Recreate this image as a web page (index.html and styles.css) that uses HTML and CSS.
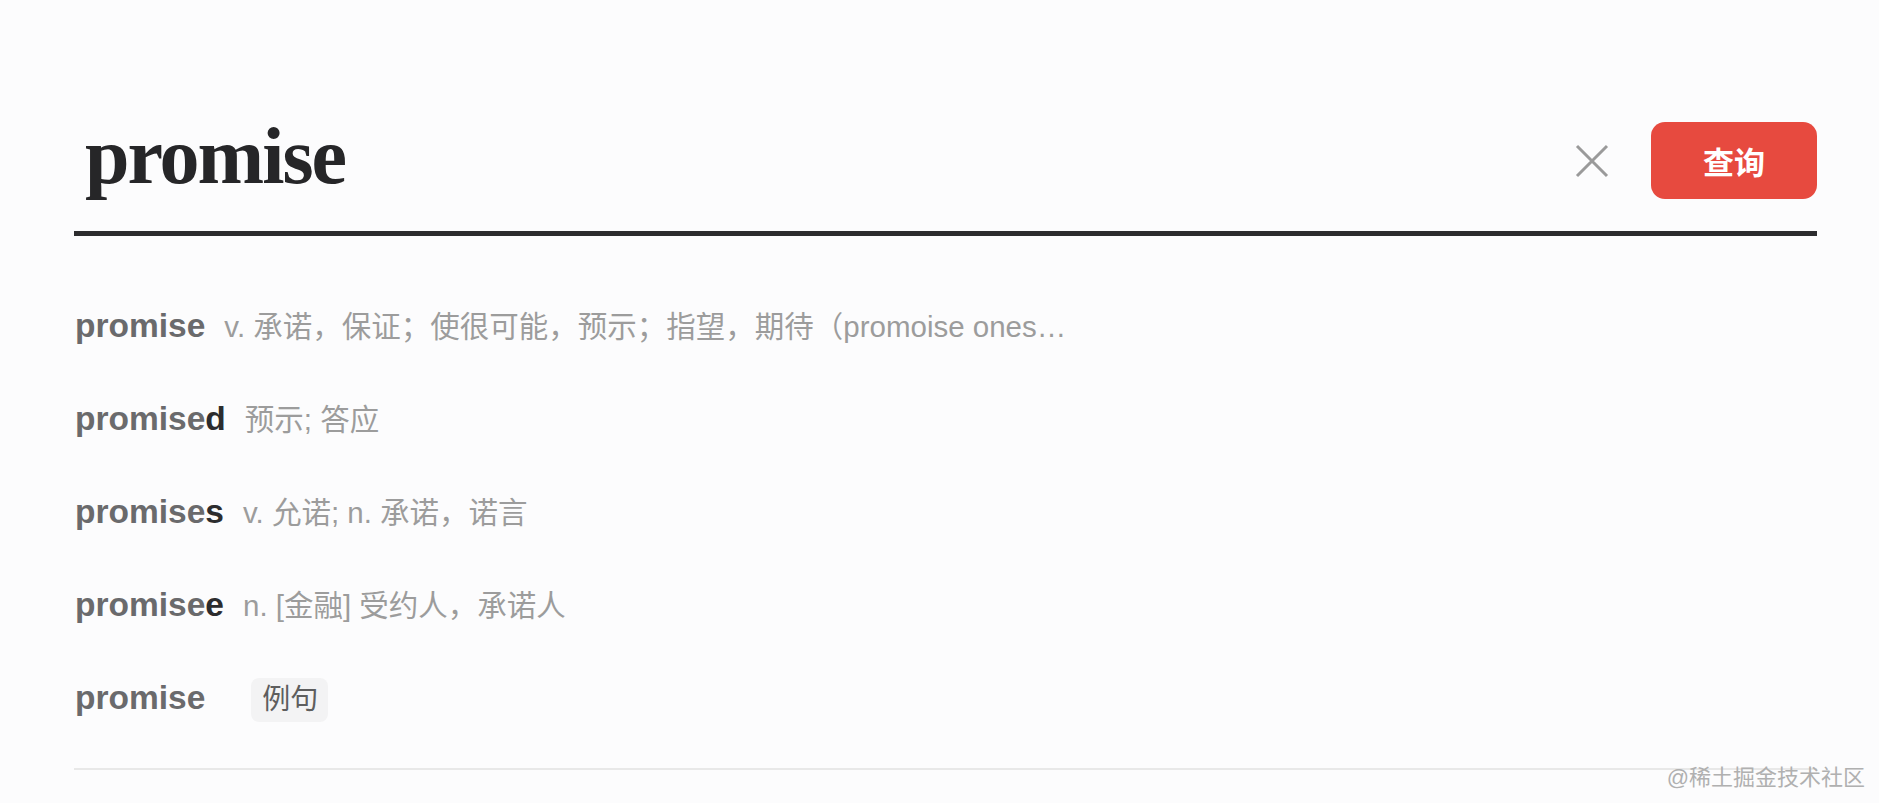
FILE: index.html
```html
<!DOCTYPE html>
<html lang="zh-CN">
<head>
<meta charset="utf-8">
<title>promise</title>
<link rel="stylesheet" href="styles.css">
</head>
<body>
<div class="page">
  <div class="search">
    <div class="query">promise</div>
    <button class="clear" aria-label="清除">
      <svg width="34" height="34" viewBox="0 0 34 34"><path d="M2 2 L32 32 M32 2 L2 32" stroke="#9a9a9a" stroke-width="3" fill="none"/></svg>
    </button>
    <button class="submit">查询</button>
  </div>
  <ul class="suggestions">
    <li class="row"><span class="word"><span class="match">promise</span></span><span class="meaning">v. 承诺，保证；使很可能，预示；指望，期待（promoise ones…</span></li>
    <li class="row"><span class="word"><span class="match">promise</span>d</span><span class="meaning">预示; 答应</span></li>
    <li class="row"><span class="word"><span class="match">promise</span>s</span><span class="meaning">v. 允诺; n. 承诺，诺言</span></li>
    <li class="row"><span class="word"><span class="match">promise</span>e</span><span class="meaning">n. [金融] 受约人，承诺人</span></li>
    <li class="row"><span class="word"><span class="match">promise</span></span><span class="tag">例句</span></li>
  </ul>
</div>
<div class="watermark">@稀土掘金技术社区</div>
</body>
</html>
```
FILE: styles.css
```css
html, body {
  margin: 0;
  padding: 0;
  background: #fcfcfd;
}
body {
  font-family: "Liberation Sans", "Noto Sans CJK SC", sans-serif;
  width: 1879px;
  height: 803px;
  overflow: hidden;
  position: relative;
}
.page {
  padding: 0 62px 0 74px;
}
.search {
  display: flex;
  align-items: center;
  padding-top: 122px;
  padding-bottom: 32px;
  height: 77px;
  border-bottom: 5px solid #2c2c2e;
}
.query {
  flex: 1;
  font-family: "Liberation Serif", "Noto Sans CJK SC", serif;
  font-weight: bold;
  font-size: 80px;
  letter-spacing: -2px;
  line-height: 80px;
  color: #262628;
  padding-left: 11px;
  margin-bottom: 9px;
}
.clear {
  border: 0;
  background: none;
  padding: 0;
  margin: 0 42px 0 0;
  width: 34px;
  height: 34px;
  display: flex;
}
.submit {
  width: 166px;
  height: 77px;
  border: 0;
  border-radius: 14px;
  background: #e74a3f;
  color: #ffffff;
  font-family: "Noto Sans CJK SC", sans-serif;
  font-weight: bold;
  font-size: 31px;
  padding: 0;
}
.suggestions {
  list-style: none;
  margin: 0;
  padding: 43px 0 24px;
  border-bottom: 2px solid #e8e8e8;
}
.row {
  font-size: 33.5px;
  line-height: 93px;
  height: 93px;
  white-space: nowrap;
}
.word {
  font-weight: bold;
  color: #2c2c2e;
  line-height: 1;
  margin-left: 1px;
}
.match {
  color: #6a6a6c;
}
.meaning {
  font-size: 29.5px;
  line-height: 1;
  color: #9c9c9c;
  margin-left: 19px;
}
.tag {
  display: inline-block;
  font-size: 28px;
  line-height: 44px;
  height: 44px;
  padding: 0 10px 0 11px;
  margin-left: 46px;
  border-radius: 8px;
  background: #f3f3f4;
  color: #5e5e5e;
}
.watermark {
  position: absolute;
  right: 14px;
  top: 764px;
  font-size: 22px;
  line-height: 28px;
  color: #b0b0b0;
}
```
